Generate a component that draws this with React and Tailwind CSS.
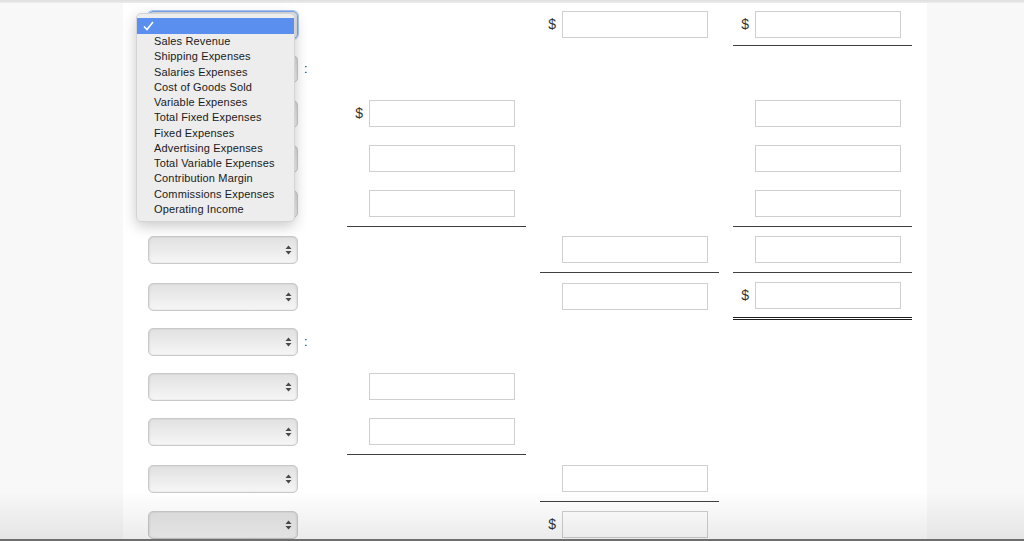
const OPTIONS = [
  "Sales Revenue",
  "Shipping Expenses",
  "Salaries Expenses",
  "Cost of Goods Sold",
  "Variable Expenses",
  "Total Fixed Expenses",
  "Fixed Expenses",
  "Advertising Expenses",
  "Total Variable Expenses",
  "Contribution Margin",
  "Commissions Expenses",
  "Operating Income",
];

// cols: null = empty cell, {} = input, {d:true} = input with $ ; b: s = single rule, d = double rule
const ROWS = [
  { h: "h-[43px]", cols: [null, { d: true }, { d: true }], b: [null, null, "s"], focus: true },
  { h: "h-[45px]", cols: [null, null, null], colon: true },
  { h: "h-[45px]", cols: [{ d: true }, null, {}] },
  { h: "h-[45px]", cols: [{}, null, {}] },
  { h: "h-[46px]", cols: [{}, null, {}], b: ["s", null, "s"] },
  { h: "h-[46px]", cols: [null, {}, {}], b: [null, "s", "s"] },
  { h: "h-[47px]", cols: [null, {}, { d: true }], b: [null, null, "d"] },
  { h: "h-[44px]", cols: [null, null, null], colon: true },
  { h: "h-[45px]", cols: [{}, null, null] },
  { h: "h-[46px]", cols: [{}, null, null], b: ["s", null, null] },
  { h: "h-[47px]", cols: [null, {}, null], b: [null, "s", null] },
  { h: "h-[45px]", cols: [null, { d: true }, null] },
];

const Arrows = () => (
  <svg width="7" height="10" viewBox="0 0 7 10" className="text-[#4a4a4a]">
    <path d="M3.5 0.5 L6.5 4 L0.5 4 Z" fill="currentColor" />
    <path d="M3.5 9.5 L6.5 6 L0.5 6 Z" fill="currentColor" />
  </svg>
);

const SelectBox = ({ focus }) => (
  <div
    className={`w-[150px] h-[28px] box-border rounded-[5px] border flex items-center justify-end pr-[5px] bg-gradient-to-b from-[#e1e1e1] to-[#f6f6f6] shadow-[inset_1px_0_2px_rgba(0,0,0,0.07),inset_-1px_0_2px_rgba(0,0,0,0.07)] ${
      focus ? "border-[#7aa7f0] ring-1 ring-[#a9c8f7]" : "border-[#c9c9c9]"
    }`}
  >
    <Arrows />
  </div>
);

const AmountCell = ({ cell, rule }) => {
  let border = "";
  if (rule === "s") border = "border-b border-[#3f3f3f]";
  if (rule === "d") border = "border-b-[3px] border-double border-[#1f1f1f]";
  return (
    <div className={`w-[179px] h-full box-border flex items-center justify-end pr-[11px] gap-[6px] ${border}`}>
      {cell?.d && <span className="text-[14px] text-[#333]">$</span>}
      {cell && <div className="w-[146px] h-[27px] box-border border border-[#cfcfcf] bg-white"></div>}
    </div>
  );
};

const Dropdown = () => (
  <div className="absolute left-[136px] top-[13px] w-[159px] box-border pt-[4px] pb-[4px] bg-[#ededed] border border-[#d4d4d4] rounded-[5px] shadow-[0_4px_14px_rgba(0,0,0,0.22)]">
    <div className="h-[16px] bg-[#5a8ff0] flex items-center pl-[6px]">
      <svg width="11" height="10" viewBox="0 0 11 10">
        <path d="M1 5.5 L4 8.5 L10 1" fill="none" stroke="white" strokeWidth="1.6" />
      </svg>
    </div>
    {OPTIONS.map((opt) => (
      <div key={opt} className="h-[15.27px] leading-[15.27px] pl-[17px] text-[11px] tracking-[0.15px] text-[#1a1a1a]">
        {opt}
      </div>
    ))}
  </div>
);

export default function App() {
  return (
    <div className="relative w-[1024px] h-[541px] overflow-hidden bg-[#f8f8f8]" style={{ fontFamily: '"Liberation Sans", Arial, sans-serif' }}>
      <div className="h-[3px] bg-gradient-to-b from-[#dedede] to-[#ececec]"></div>
      <div className="ml-[123px] w-[804px] bg-white">
        {ROWS.map((row, i) => (
          <div key={i} className={`flex ${row.h}`}>
            <div className="w-[224px] flex items-center pl-[25px]">
              <SelectBox focus={row.focus} />
              {row.colon && <span className="ml-[6px] text-[13px] text-[#333]">:</span>}
            </div>
            <AmountCell cell={row.cols[0]} rule={row.b?.[0]} />
            <div className="w-[14px]"></div>
            <AmountCell cell={row.cols[1]} rule={row.b?.[1]} />
            <div className="w-[14px]"></div>
            <AmountCell cell={row.cols[2]} rule={row.b?.[2]} />
          </div>
        ))}
      </div>
      <Dropdown />
      <div className="pointer-events-none absolute left-0 right-0 bottom-[2px] h-[48px] bg-gradient-to-b from-transparent to-[rgba(0,0,0,0.08)]"></div>
      <div className="absolute left-0 right-0 bottom-0 h-[2px] bg-[#6e6e6e]"></div>
    </div>
  );
}
